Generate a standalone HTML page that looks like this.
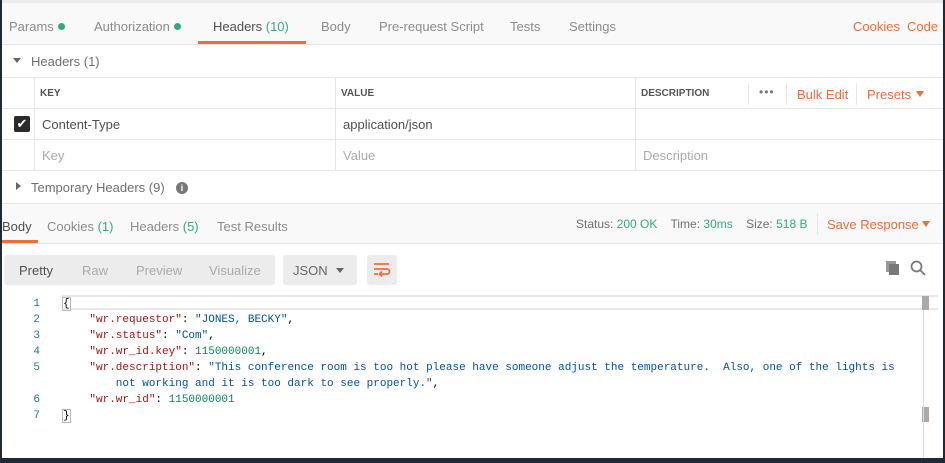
<!DOCTYPE html>
<html><head><meta charset="utf-8"><style>
*{margin:0;padding:0;box-sizing:border-box}
body{width:945px;height:463px;overflow:hidden;background:#1f2a36;font-family:"Liberation Sans",sans-serif;font-size:13px;position:relative}
#main{position:absolute;left:2px;top:0;width:941px;height:458px;background:#fff;overflow:hidden}
.abs{position:absolute;white-space:nowrap}
.g{color:#2fac7c}.o{color:#f26b3a}.gr{color:#8c8c8c}.d{color:#505050}
.hl{position:absolute;left:0;right:0;height:1px;background:#e6e6e6}
.vl{position:absolute;width:1px;background:#e6e6e6}
.dot{display:inline-block;width:7px;height:7px;border-radius:50%;background:#2fac7c;margin-left:4px;vertical-align:1px}
.code{font-family:"Liberation Mono",monospace;font-size:11px;position:absolute;white-space:pre;line-height:16px}
.k{color:#a31515}.s{color:#0451a5}.n{color:#098658}
.tri{position:absolute;width:0;height:0}
</style></head><body>
<div id="main">
<div style="position:absolute;left:0;top:0;right:0;height:3px;background:#ececec"></div>
<div style="position:absolute;left:0;top:3px;right:0;height:41px;background:#f9f9f9"></div>
<div class="hl" style="top:44px"></div>
<div class="abs gr" style="left:7px;top:19px">Params<span class="dot"></span></div>
<div class="abs gr" style="left:92px;top:19px">Authorization<span class="dot"></span></div>
<div class="abs d" style="left:211px;top:19px">Headers <span class="g">(10)</span></div>
<div style="position:absolute;left:196px;top:41px;width:108px;height:3px;background:#f26b3a"></div>
<div class="abs gr" style="left:319px;top:19px">Body</div>
<div class="abs gr" style="left:377px;top:19px">Pre-request Script</div>
<div class="abs gr" style="left:508px;top:19px">Tests</div>
<div class="abs gr" style="left:567px;top:19px">Settings</div>
<div class="abs o" style="left:851px;top:19px">Cookies</div>
<div class="abs o" style="left:905px;top:19px">Code</div>

<div class="tri" style="left:11px;top:58px;border-left:4px solid transparent;border-right:4px solid transparent;border-top:5px solid #666"></div>
<div class="abs" style="left:29px;top:54px;color:#707070">Headers (1)</div>
<div class="hl" style="top:77px"></div>
<div class="vl" style="left:32px;top:78px;height:93px"></div>
<div class="vl" style="left:333px;top:78px;height:93px"></div>
<div class="vl" style="left:633px;top:78px;height:93px"></div>
<div class="vl" style="left:746px;top:83px;height:22px"></div>
<div class="vl" style="left:784px;top:83px;height:22px"></div>
<div class="vl" style="left:854px;top:83px;height:22px"></div>
<div class="abs" style="left:38px;top:88px;font-size:10px;font-weight:bold;color:#555">KEY</div>
<div class="abs" style="left:339px;top:88px;font-size:10px;font-weight:bold;color:#555">VALUE</div>
<div class="abs" style="left:639px;top:88px;font-size:10px;font-weight:bold;color:#555">DESCRIPTION</div>
<div class="abs" style="left:757px;top:85px;color:#777;font-size:12px;letter-spacing:1px">•••</div>
<div class="abs o" style="left:795px;top:87px">Bulk Edit</div>
<div class="abs o" style="left:865px;top:87px">Presets</div>
<div class="tri" style="left:914px;top:91px;border-left:4px solid transparent;border-right:4px solid transparent;border-top:6px solid #f26b3a"></div>
<div class="hl" style="top:108px"></div>
<div style="position:absolute;left:12px;top:116px;width:16px;height:16px;background:#2b2b2b;border-radius:2px;color:#fff;font-size:13px;line-height:16px;text-align:center">✔</div>
<div class="abs d" style="left:40px;top:117px">Content-Type</div>
<div class="abs d" style="left:341px;top:117px">application/json</div>
<div class="hl" style="top:139px"></div>
<div class="abs" style="left:40px;top:148px;color:#aaa">Key</div>
<div class="abs" style="left:341px;top:148px;color:#aaa">Value</div>
<div class="abs" style="left:641px;top:148px;color:#aaa">Description</div>
<div class="hl" style="top:170px"></div>
<div class="tri" style="left:14px;top:182px;border-top:4px solid transparent;border-bottom:4px solid transparent;border-left:5px solid #666"></div>
<div class="abs" style="left:29px;top:180px;color:#707070">Temporary Headers (9)</div>
<div style="position:absolute;left:174px;top:182px;width:12px;height:12px;border-radius:50%;background:#777;color:#fff;font-size:9px;line-height:12px;text-align:center;font-weight:bold">i</div>
<div class="hl" style="top:203px"></div>

<div style="position:absolute;left:0;top:204px;right:0;height:39px;background:#f9f9f9"></div>
<div class="hl" style="top:243px"></div>
<div class="abs d" style="left:0;top:219px">Body</div>
<div style="position:absolute;left:0;top:240px;width:36px;height:3px;background:#f26b3a"></div>
<div class="abs gr" style="left:45px;top:219px">Cookies <span class="g">(1)</span></div>
<div class="abs gr" style="left:128px;top:219px">Headers <span class="g">(5)</span></div>
<div class="abs gr" style="left:215px;top:219px">Test Results</div>
<div class="abs" style="left:574px;top:217px;font-size:12px;color:#707070">Status: <span class="g">200 OK</span>&nbsp;&nbsp;&nbsp; Time: <span class="g">30ms</span>&nbsp;&nbsp;&nbsp; Size: <span class="g">518 B</span></div>
<div class="vl" style="left:815px;top:213px;height:22px"></div>
<div class="abs o" style="left:825px;top:217px">Save Response</div>
<div class="tri" style="left:920px;top:221px;border-left:4px solid transparent;border-right:4px solid transparent;border-top:6px solid #f26b3a"></div>

<div style="position:absolute;left:2px;top:255px;width:271px;height:30px;background:#ececec;border-radius:3px"></div>
<div class="abs d" style="left:17px;top:263px">Pretty</div>
<div class="abs" style="left:80px;top:263px;color:#aaa">Raw</div>
<div class="abs" style="left:134px;top:263px;color:#aaa">Preview</div>
<div class="abs" style="left:207px;top:263px;color:#aaa">Visualize</div>
<div style="position:absolute;left:281px;top:255px;width:74px;height:30px;background:#ececec;border-radius:3px"></div>
<div class="abs" style="left:291px;top:263px;color:#666">JSON</div>
<div class="tri" style="left:334px;top:268px;border-left:4px solid transparent;border-right:4px solid transparent;border-top:5px solid #666"></div>
<div style="position:absolute;left:365px;top:255px;width:30px;height:30px;background:#ececec;border-radius:3px"></div>
<svg style="position:absolute;left:371px;top:262px" width="18" height="16" viewBox="0 0 18 16"><g stroke="#f26b3a" stroke-width="1.8" fill="none"><path d="M1 2h15M1 7h13a2.5 2.5 0 0 1 0 5H7M1 12h4"/><path d="M9 9.5l-2.5 2.5 2.5 2.5"/></g></svg>
<svg style="position:absolute;left:883px;top:260px" width="16" height="16" viewBox="0 0 16 16"><rect x="1" y="1" width="10" height="11" fill="#999"/><rect x="4" y="4" width="10" height="11" fill="#777"/></svg>
<svg style="position:absolute;left:908px;top:260px" width="16" height="16" viewBox="0 0 16 16"><circle cx="6.5" cy="6.5" r="5" stroke="#777" stroke-width="1.7" fill="none"/><path d="M10 10l5 5" stroke="#777" stroke-width="1.8"/></svg>

<div style="position:absolute;left:60px;top:295px;width:876px;height:15px;border:1px solid #e8e8e8;border-width:2px 0"></div>
<div style="position:absolute;left:920px;top:296px;width:7px;height:14px;background:#aaa"></div>
<div style="position:absolute;left:920px;top:407px;width:7px;height:15px;background:#aaa"></div>
<div class="vl" style="left:921px;top:310px;height:148px;background:#ddd"></div>
<div class="code" style="left:20px;top:296px;width:18px;text-align:right;color:#237893">1
2
3
4
5

6
7</div>
<div class="code" style="left:61px;top:296px;color:#000"><span style="outline:1px solid #bbb">{</span>
    <span class="k">"wr.requestor"</span>: <span class="s">"JONES, BECKY"</span>,
    <span class="k">"wr.status"</span>: <span class="s">"Com"</span>,
    <span class="k">"wr.wr_id.key"</span>: <span class="n">1150000001</span>,
    <span class="k">"wr.description"</span>: <span class="s">"This conference room is too hot please have someone adjust the temperature.  Also, one of the lights is</span>
<span class="s">        not working and it is too dark to see properly."</span>,
    <span class="k">"wr.wr_id"</span>: <span class="n">1150000001</span>
<span style="outline:1px solid #bbb">}</span></div>
</div>
</body></html>
